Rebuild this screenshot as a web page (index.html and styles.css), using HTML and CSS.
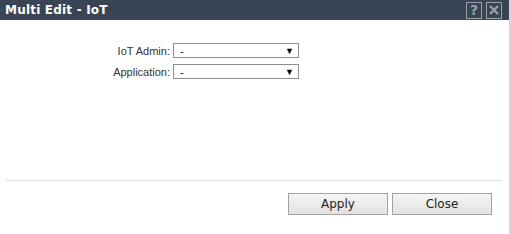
FILE: index.html
```html
<!DOCTYPE html>
<html>
<head>
<meta charset="utf-8">
<link rel="stylesheet" href="styles.css">
</head>
<body>
<div class="page">
  <div class="dialog">
    <div class="titlebar">
      <span class="title">Multi Edit - IoT</span>
      <div class="tools">
        <span class="tool">?</span>
        <span class="tool x">
          <svg width="10" height="10" viewBox="0 0 10 10"><path d="M1 1L9 9M9 1L1 9" stroke="#9aa0a8" stroke-width="2.4"/></svg>
        </span>
      </div>
    </div>
    <div class="content">
      <div class="form">
        <label class="lbl">IoT Admin:</label>
        <div class="select"><span>-</span><span class="arrow">▼</span></div>
        <label class="lbl">Application:</label>
        <div class="select"><span>-</span><span class="arrow">▼</span></div>
      </div>
    </div>
    <div class="sep"></div>
    <div class="buttons">
      <button class="btn">Apply</button>
      <button class="btn">Close</button>
    </div>
  </div>
  <div class="edge"></div>
</div>
</body>
</html>
```
FILE: styles.css
```css
html, body { margin: 0; padding: 0; background: #fff; }
.page { display: flex; width: 511px; height: 234px; }
.dialog { width: 509px; display: flex; flex-direction: column; background: #fff; }
.edge { width: 2px; background: #c9d8ee; }
.titlebar {
  height: 20px; background: #394454; display: flex; align-items: center;
  justify-content: space-between; padding: 0 7px 0 5px;
}
.title { font-family: "DejaVu Sans", Verdana, sans-serif; font-weight: bold; font-size: 12px; color: #fff; letter-spacing: 0.2px; }
.tools { display: flex; gap: 4px; }
.tool {
  width: 14px; height: 15px; border: 1px solid #9aa0a8; display: flex; align-items: center; justify-content: center;
  font-family: "DejaVu Sans", sans-serif; font-weight: bold; font-size: 14px; color: #9aa0a8; line-height: 1;
}
.content { flex: 1; padding-top: 23px; }
.form {
  display: grid; grid-template-columns: 170px 126px; column-gap: 3px; row-gap: 6px; align-items: center;
}
.lbl { font-family: "Liberation Sans", Arial, sans-serif; font-size: 11px; color: #333; text-align: right; }
.select {
  height: 13px; border: 1px solid #8f8f8f; display: flex; align-items: center; justify-content: space-between;
  padding: 0 4px 0 6px; font-family: "Liberation Sans", Arial, sans-serif; font-size: 11px; color: #000;
}
.arrow { font-size: 9px; }
.sep { height: 1px; background: #dedede; margin: 0 7px 12px 5px; }
.buttons { display: flex; justify-content: flex-end; gap: 4px; padding: 0 17px 19px 0; }
.btn {
  width: 100px; height: 22px; border: 1px solid #a3a3a3; border-radius: 0;
  background: linear-gradient(#f5f5f5, #e2e2e2);
  font-family: "DejaVu Sans", Verdana, sans-serif; font-size: 12px; color: #222; padding: 0;
}
```
